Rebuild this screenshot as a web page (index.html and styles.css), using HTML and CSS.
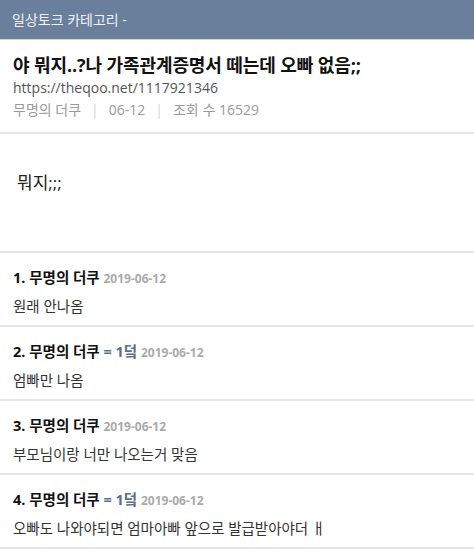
FILE: index.html
```html
<!DOCTYPE html>
<html lang="ko">
<head>
<meta charset="utf-8">
<link rel="stylesheet" href="styles.css">
</head>
<body>
<div class="page">
  <div class="cat-bar">일상토크 카테고리 -</div>
  <div class="post-head">
    <h1 class="title">야 뭐지..?나 가족관계증명서 떼는데 오빠 없음;;</h1>
    <div class="url">https://theqoo.net/1117921346</div>
    <div class="meta"><span>무명의 더쿠</span><span class="sep">|</span><span>06-12</span><span class="sep">|</span><span>조회 수 16529</span></div>
  </div>
  <div class="post-body">뭐지;;;</div>
  <ul class="comments">
    <li class="comment">
      <div class="c-head"><b class="num">1.</b> <b class="name">무명의 더쿠</b> <span class="date">2019-06-12</span></div>
      <div class="c-text">원래 안나옴</div>
    </li>
    <li class="comment">
      <div class="c-head"><b class="num">2.</b> <b class="name">무명의 더쿠</b> <b class="same">= 1덬</b> <span class="date">2019-06-12</span></div>
      <div class="c-text">엄빠만 나옴</div>
    </li>
    <li class="comment">
      <div class="c-head"><b class="num">3.</b> <b class="name">무명의 더쿠</b> <span class="date">2019-06-12</span></div>
      <div class="c-text">부모님이랑 너만 나오는거 맞음</div>
    </li>
    <li class="comment">
      <div class="c-head"><b class="num">4.</b> <b class="name">무명의 더쿠</b> <b class="same">= 1덬</b> <span class="date">2019-06-12</span></div>
      <div class="c-text">오빠도 나와야되면 엄마아빠 앞으로 발급받아야더 ㅐ</div>
    </li>
  </ul>
</div>
</body>
</html>
```

FILE: styles.css
```css
* { box-sizing: border-box; }
html, body { margin: 0; padding: 0; background: #fff; }
body {
  font-family: "Open Sans", "Noto Sans CJK KR", sans-serif;
  color: #222;
}
.page { width: 474px; }
.cat-bar {
  height: 40px;
  background: #6a7f9c;
  color: #eef1f6;
  font-size: 14px;
  line-height: 40px;
  padding-left: 12px;
  border-bottom: 1px solid #cfd5de;
}
.post-head {
  padding: 13px 13px 0 13px;
  height: 94px;
  border-bottom: 2px solid #e6e6e6;
}
.title {
  margin: 0;
  font-size: 18px;
  font-weight: bold;
  line-height: 24px;
  color: #111;
  letter-spacing: -0.1px;
}
.url {
  font-size: 14px;
  color: #555;
  line-height: 22px;
  margin-top: 0;
}
.meta {
  font-size: 14px;
  color: #9a9a9a;
  line-height: 22px;
  display: flex;
  gap: 10px;
}
.sep { color: #d6d6d6; }
.post-body {
  height: 119px;
  padding: 37px 17px 0;
  font-size: 17px;
  line-height: 24px;
  color: #222;
  border-bottom: 2px solid #e6e6e6;
}
.comments { list-style: none; margin: 0; padding: 0; }
.comment {
  height: 74px;
  padding: 14px 13px 0;
  border-bottom: 2px solid #e6e6e6;
}
.c-head { font-size: 14.5px; line-height: 22px; color: #111; }
.num, .name { font-weight: bold; color: #111; }
.same { color: #5b6f8c; font-weight: bold; }
.date { font-size: 12px; font-weight: bold; color: #aaa; }
.c-text { font-size: 14.5px; line-height: 22px; color: #333; margin-top: 6px; }
```
